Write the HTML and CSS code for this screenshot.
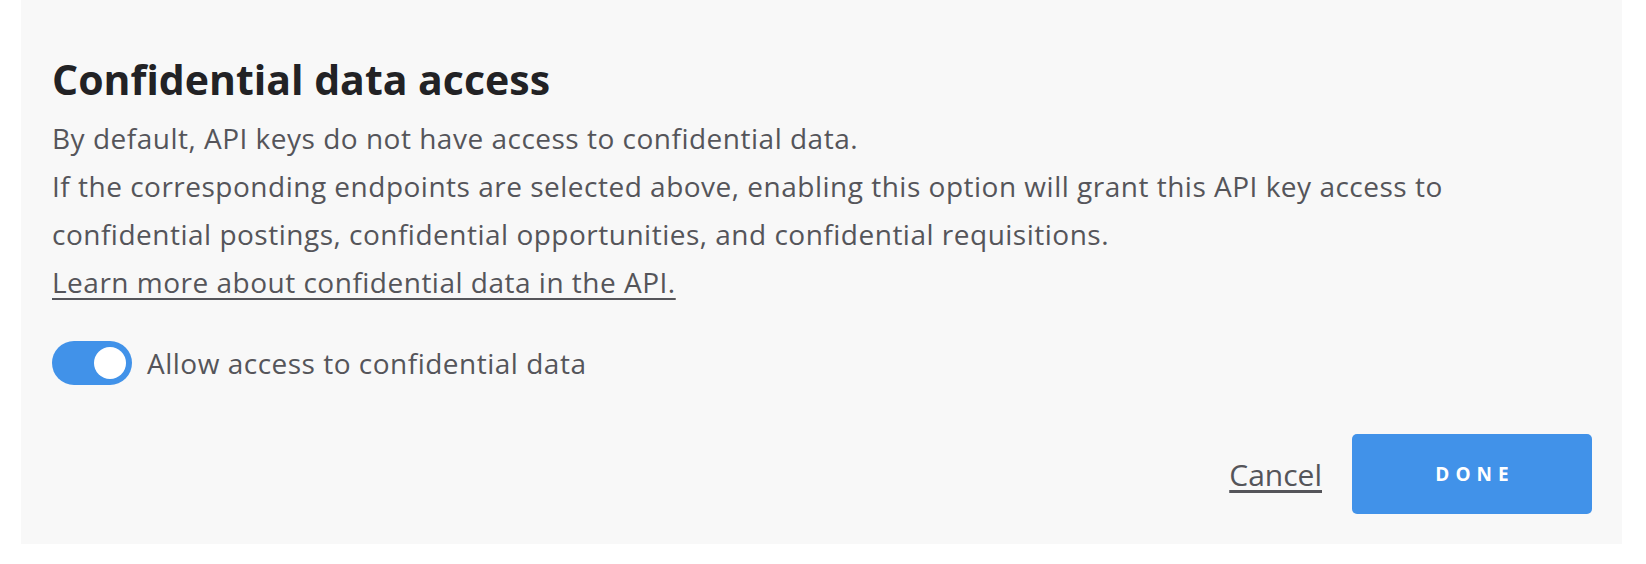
FILE: index.html
```html
<!DOCTYPE html>
<html lang="en">
<head>
    <meta charset="UTF-8">
    <meta name="viewport" content="width=device-width, initial-scale=1.0">
    <title>Confidential data access</title>
    <link rel="stylesheet" href="styles.css">
</head>
<body>
    <div class="page">
        <div class="panel">
            <h1>Confidential data access</h1>
            <div class="intro">
                <p>By default, API keys do not have access to confidential data.</p>
                <p>If the corresponding endpoints are selected above, enabling this option will grant this API key access to confidential postings, confidential opportunities, and confidential requisitions.</p>
                <p><a href="#" class="learn-link">Learn more about confidential data in the API.</a></p>
            </div>

            <label class="toggle-row">
                <input type="checkbox" class="toggle-input" checked>
                <span class="toggle"><span class="toggle-knob"></span></span>
                <span class="toggle-label">Allow access to confidential data</span>
            </label>

            <div class="actions">
                <a href="#" class="cancel-link">Cancel</a>
                <button class="done-button">DONE</button>
            </div>
        </div>
    </div>
</body>
</html>
```

FILE: styles.css
```css
* {
    margin: 0;
    padding: 0;
    box-sizing: border-box;
}

body {
    background-color: white;
    font-family: "Open Sans", "Liberation Sans", sans-serif;
    color: #55555a;
}

.page {
    padding-left: 21px;
}

.panel {
    width: 1601px;
    height: 544px;
    background-color: #f8f8f8;
    padding: 30px 30px 30px 31px;
    display: flex;
    flex-direction: column;
}

h1 {
    font-size: 41px;
    font-weight: 700;
    line-height: 52px;
    color: #222225;
    margin-top: 23px;
    margin-bottom: 9px;
}

.intro {
    max-width: 1450px;
}

.intro p {
    font-size: 28px;
    line-height: 48px;
    letter-spacing: 0.5px;
}

.learn-link {
    color: #55555a;
    text-decoration: underline;
    text-decoration-thickness: 2px;
    text-underline-offset: 5px;
}

.toggle-row {
    display: flex;
    align-items: center;
    gap: 15px;
    margin-top: 35px;
    cursor: pointer;
}

.toggle-input {
    display: none;
}

.toggle {
    width: 80px;
    height: 44px;
    border-radius: 22px;
    background-color: #ccc;
    padding: 6px;
    display: flex;
    align-items: center;
}

.toggle-knob {
    width: 32px;
    height: 32px;
    border-radius: 50%;
    background-color: white;
    transition: transform 0.2s ease;
}

.toggle-input:checked + .toggle {
    background-color: #4192e9;
}

.toggle-input:checked + .toggle .toggle-knob {
    transform: translateX(36px);
}

.toggle-label {
    font-size: 28px;
    letter-spacing: 0.5px;
}

.actions {
    margin-top: auto;
    display: flex;
    justify-content: flex-end;
    align-items: center;
    gap: 30px;
}

.cancel-link {
    font-size: 30px;
    color: #55555a;
    text-decoration: underline;
    text-decoration-thickness: 3px;
    text-underline-offset: 4px;
}

.done-button {
    width: 240px;
    height: 80px;
    border: none;
    border-radius: 5px;
    background-color: #4192e9;
    color: white;
    font-family: "Open Sans", "Liberation Sans", sans-serif;
    font-size: 19px;
    font-weight: 700;
    letter-spacing: 6px;
    padding-left: 6px;
    cursor: pointer;
}
```
